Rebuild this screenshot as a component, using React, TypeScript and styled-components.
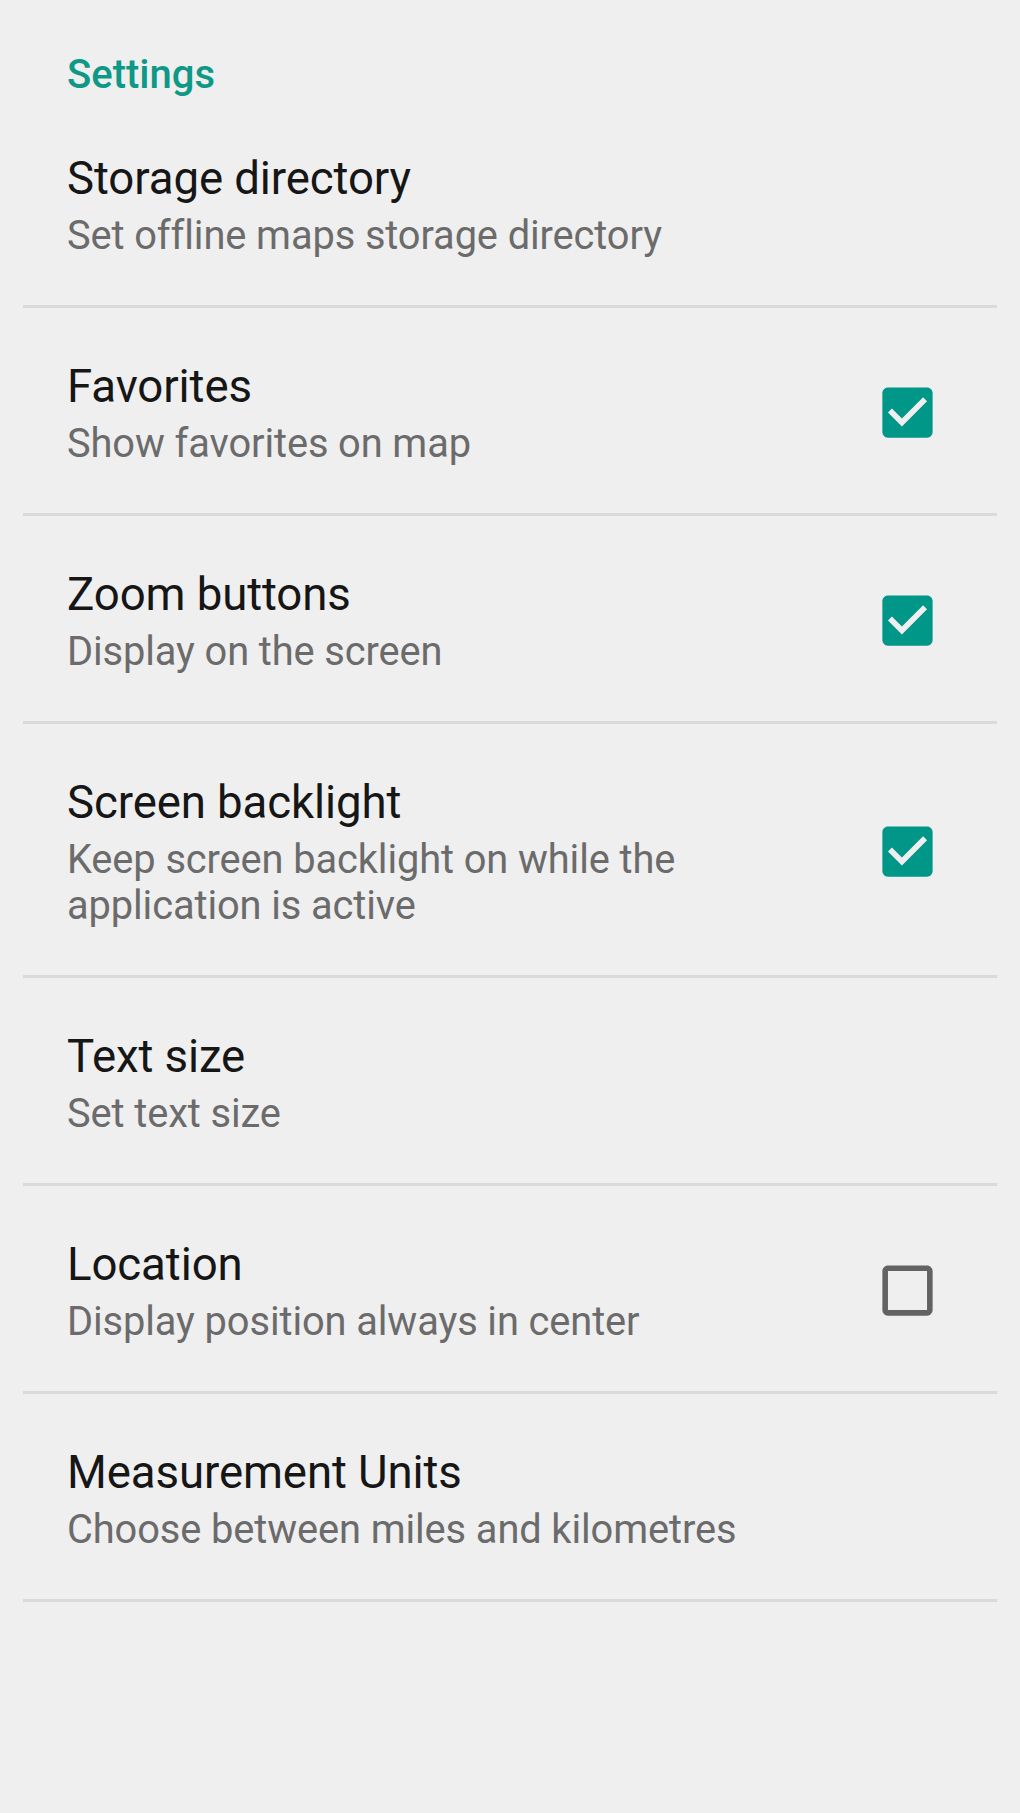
import React from "react";
import styled, { createGlobalStyle } from "styled-components";

const GlobalStyle = createGlobalStyle`
  html, body {
    margin: 0;
    padding: 0;
    background: #efefef;
  }
  body {
    font-family: Roboto, "Noto Sans", "Liberation Sans", sans-serif;
    -webkit-font-smoothing: antialiased;
  }
  #root {
    min-height: 100vh;
  }
`;

const Screen = styled.div`
  min-height: 100vh;
  background: #efefef;
  padding: 0 23px;
  box-sizing: border-box;
`;

const CategoryHeader = styled.div`
  height: 100px;
  box-sizing: border-box;
  padding: 51px 0 0 44px;
  font-size: 40px;
  line-height: 48px;
  font-weight: 500;
  color: #0e9886;
`;

const List = styled.div`
  display: flex;
  flex-direction: column;
`;

const Row = styled.div`
  display: flex;
  align-items: center;
  padding: 52px 56px 46px 44px;
  border-bottom: 3px solid #dadada;
`;

const TextBlock = styled.div`
  flex: 1;
  min-width: 0;
  margin-right: 40px;
`;

const Title = styled.div`
  font-size: 45.6px;
  line-height: 54px;
  color: #161616;
  letter-spacing: -0.1px;
`;

const Summary = styled.div`
  margin-top: 7px;
  font-size: 39.8px;
  line-height: 46px;
  color: #6b6b6b;
  letter-spacing: -0.1px;
`;

const CheckIcon = styled.svg<{ $checked: boolean }>`
  flex: none;
  width: 67px;
  height: 67px;
  display: block;
  margin-top: -2px;
  fill: ${(p) => (p.$checked ? "#009688" : "#626262")};
`;

const Checkbox: React.FC<{ checked: boolean }> = ({ checked }) => (
  <CheckIcon viewBox="0 0 24 24" $checked={checked}>
    {checked ? (
      <path d="M19 3H5c-1.11 0-2 .9-2 2v14c0 1.1.89 2 2 2h14c1.11 0 2-.9 2-2V5c0-1.1-.89-2-2-2zm-9 14l-5-5 1.41-1.41L10 14.170l7.59-7.59L19 8l-9 9z" />
    ) : (
      <path d="M19 5v14H5V5h14m0-2H5c-1.1 0-2 .9-2 2v14c0 1.1.9 2 2 2h14c1.1 0 2-.9 2-2V5c0-1.1-.9-2-2-2z" />
    )}
  </CheckIcon>
);

type Pref = { title: string; summary: string; checked?: boolean };

const prefs: Pref[] = [
  { title: "Storage directory", summary: "Set offline maps storage directory" },
  { title: "Favorites", summary: "Show favorites on map", checked: true },
  { title: "Zoom buttons", summary: "Display on the screen", checked: true },
  {
    title: "Screen backlight",
    summary: "Keep screen backlight on while the application is active",
    checked: true,
  },
  { title: "Text size", summary: "Set text size" },
  { title: "Location", summary: "Display position always in center", checked: false },
  { title: "Measurement Units", summary: "Choose between miles and kilometres" },
];

export default function App() {
  return (
    <>
      <GlobalStyle />
      <Screen>
        <CategoryHeader>Settings</CategoryHeader>
        <List>
          {prefs.map((p) => (
            <Row key={p.title}>
              <TextBlock>
                <Title>{p.title}</Title>
                <Summary>{p.summary}</Summary>
              </TextBlock>
              {p.checked !== undefined && <Checkbox checked={p.checked} />}
            </Row>
          ))}
        </List>
      </Screen>
    </>
  );
}
